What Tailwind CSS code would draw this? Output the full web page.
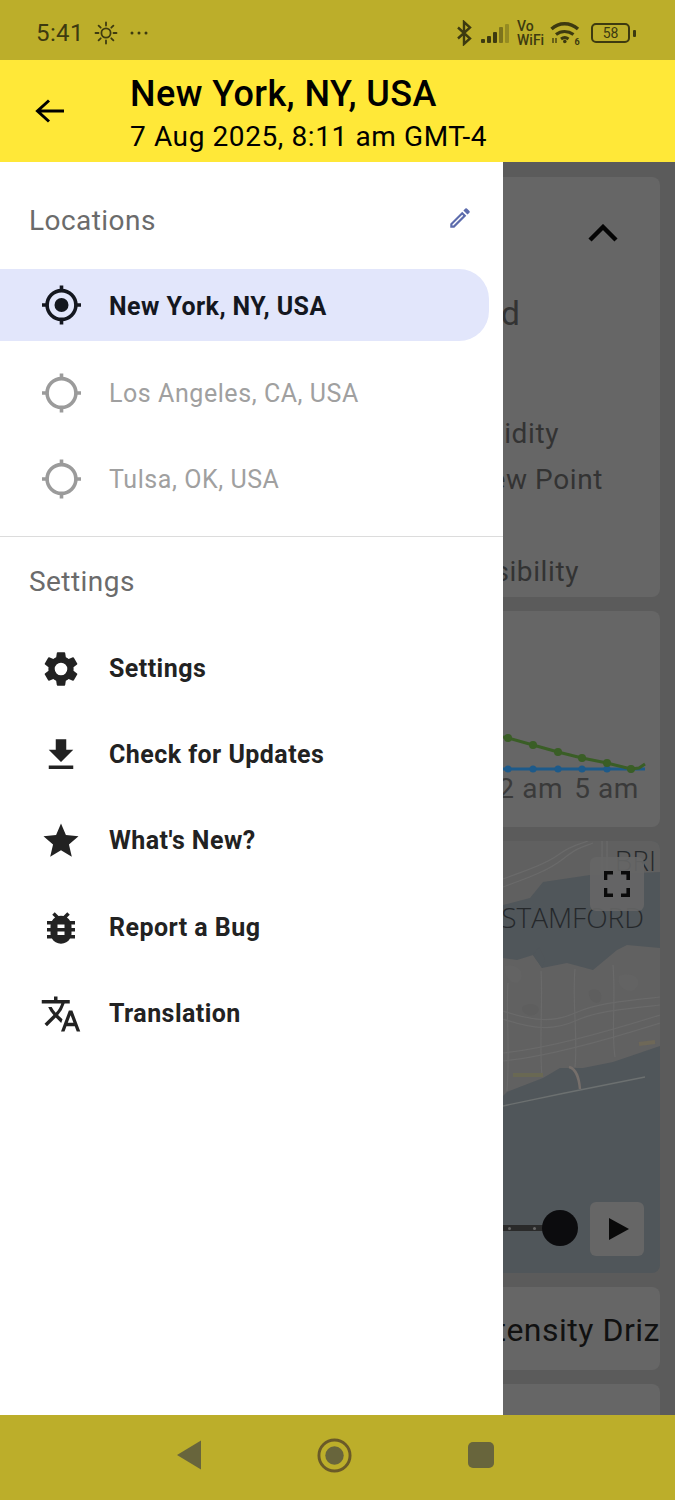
<!DOCTYPE html>
<html>
<head>
<meta charset="utf-8">
<script src="https://cdn.jsdelivr.net/npm/@tailwindcss/browser@4"></script>
</head>
<body class="m-0 bg-white">
<div class="w-[675px] h-[1500px] flex flex-col overflow-hidden font-['Roboto',sans-serif] bg-white">
  <!-- status bar -->
  <div class="h-[60px] shrink-0 bg-[#bcae2a] flex items-center justify-between pl-[36px] pr-[39px] pt-[6px] text-[#3d3a10]">
    <div class="flex items-center">
      <span class="text-[24px] leading-none tracking-[0.4px]">5:41</span>
      <svg class="ml-[10px] w-[24px] h-[24px]" viewBox="0 0 24 24" fill="none" stroke="#3d3a10" stroke-width="1.8" stroke-linecap="round"><circle cx="12" cy="12" r="4.6"/><path d="M12 1.5v3M12 19.500v3M1.500 12h3M19.500 12h3M4.600 4.600l2.100 2.100M17.300 17.300l2.100 2.100M4.600 19.400l2.100-2.100M17.300 6.700l2.100-2.100"/></svg>
      <svg class="ml-[11px] w-[20px] h-[6px]" viewBox="0 0 20 6" fill="#3d3a10"><circle cx="3" cy="3" r="1.500"/><circle cx="10" cy="3" r="1.500"/><circle cx="17" cy="3" r="1.500"/></svg>
    </div>
    <div class="flex items-center">
      <svg class="w-[16px] h-[26px]" viewBox="0 0 16 26" fill="none" stroke="#3d3a10" stroke-width="2.400"><path d="M2 7.500l12 11-6 5.500V2l6 5.500-12 11"/></svg>
      <svg class="ml-[9px] w-[30px] h-[24px]" viewBox="0 0 30 24"><rect x="0" y="18" width="4" height="4" rx="1" fill="#3d3a10"/><rect x="6" y="15" width="4" height="7" rx="1" fill="#3d3a10"/><rect x="12" y="11" width="4" height="11" rx="1" fill="#3d3a10"/><rect x="18" y="6" width="4" height="16" rx="1" fill="#3d3a10" opacity=".5"/><rect x="24" y="3" width="4" height="19" rx="1" fill="#3d3a10" opacity=".3"/></svg>
      <div class="ml-[6px] w-[28px] text-[14px] leading-[14px] font-medium flex flex-col items-start"><span>Vo</span><span>WiFi</span></div>
      <svg class="ml-[5px] w-[31px] h-[24px]" viewBox="0 0 31 24" fill="none" stroke="#3d3a10" stroke-linecap="butt"><path stroke-width="3.400" d="M1.500 8C9 1 20 1 28 8"/><path stroke-width="3.200" d="M6 13.500C11 9.500 18 9.500 23.500 13.500"/><path stroke-width="3" d="M11 18c2.500-1.800 5-1.800 7.500 0"/><circle cx="14.800" cy="20.500" r="1.800" fill="#3d3a10" stroke="none"/><path stroke-width="1.300" d="M3 22v-5M6 22v-5"/><text x="24.500" y="23.500" font-size="9" font-weight="700" fill="#3d3a10" stroke="none" font-family="Roboto">6</text></svg>
      <div class="ml-[10px] w-[39px] h-[20px] rounded-[5px] border-2 border-[#3d3a10] flex items-center justify-center text-[14px] leading-none">58</div>
      <div class="ml-[3px] w-[3px] h-[7px] bg-[#3d3a10] rounded-[1px]"></div>
    </div>
  </div>
  <!-- header -->
  <div class="h-[102px] shrink-0 bg-[#ffe838] flex items-start pt-[13px] text-black">
    <div class="w-[130px] shrink-0 pl-[34px] self-center -mt-[13px]">
      <svg class="w-[30px] h-[30px]" viewBox="0 0 30 30" fill="none" stroke="#000" stroke-width="3"><path d="M30 15H3M15 4.500L3.500 15 15 25.500"/></svg>
    </div>
    <div class="flex flex-col">
      <span class="text-[36px] leading-[42px] font-medium whitespace-nowrap tracking-[0.42px]">New York, NY, USA</span>
      <span class="mt-[5px] text-[28px] leading-[34px] whitespace-nowrap tracking-[0.6px]">7 Aug 2025, 8:11 am GMT-4</span>
    </div>
  </div>
  <!-- body -->
  <div class="flex-1 flex min-h-0">
    <!-- drawer -->
    <div class="w-[503px] shrink-0 bg-white flex flex-col">
      <div class="h-[107px] shrink-0 pl-[29px] pr-[30px] pt-[36px] flex items-start justify-between">
        <span class="text-[28px] leading-[46px] tracking-[0.45px] text-[#6b6b6b]">Locations</span>
        <svg class="w-[26px] h-[26px] mt-[7px]" viewBox="0 0 24 24" fill="#5c6bac"><path d="M3 17.250V21h3.750L17.810 9.940l-3.750-3.750L3 17.250zM5.920 19H5v-.920l9.060-9.060.920.920L5.920 19zM20.710 7.040a1 1 0 0 0 0-1.410l-2.340-2.340a1 1 0 0 0-1.410 0l-1.830 1.830 3.750 3.750 1.830-1.830z"/></svg>
      </div>
      <div class="h-[72px] shrink-0 w-[489px] bg-[#e2e6fb] rounded-r-[30px] flex items-center pl-[40px] text-[#14171f]">
        <svg class="w-[42px] h-[42px] shrink-0" viewBox="0 0 42 42" fill="none" stroke="currentColor" stroke-width="3.600"><circle cx="21.500" cy="21" r="14.400"/><circle cx="21.500" cy="21" r="7" fill="currentColor" stroke="none"/><path d="M21.500 1.500v6M21.500 34.500v6M2 21h6M35 21h6"/></svg>
        <span class="ml-[27px] mt-[3px] text-[25px] font-bold whitespace-nowrap tracking-[0.42px]">New York, NY, USA</span>
      </div>
      <div class="h-[86px] shrink-0 flex items-center pl-[40px] mt-[9px]">
        <svg class="w-[42px] h-[42px] shrink-0 text-[#9b9b9b]" viewBox="0 0 42 42" fill="none" stroke="currentColor" stroke-width="3.600"><circle cx="21.500" cy="21" r="14.400"/><path d="M21.500 1.500v6M21.500 34.500v6M2 21h6M35 21h6"/></svg>
        <span class="ml-[27px] mt-[2px] text-[25px] text-[#a0a0a0] whitespace-nowrap tracking-[0.56px]">Los Angeles, CA, USA</span>
      </div>
      <div class="h-[86px] shrink-0 flex items-center pl-[40px]">
        <svg class="w-[42px] h-[42px] shrink-0 text-[#9b9b9b]" viewBox="0 0 42 42" fill="none" stroke="currentColor" stroke-width="3.600"><circle cx="21.500" cy="21" r="14.400"/><path d="M21.500 1.500v6M21.500 34.500v6M2 21h6M35 21h6"/></svg>
        <span class="ml-[27px] mt-[2px] text-[25px] text-[#a0a0a0] whitespace-nowrap tracking-[0.56px]">Tulsa, OK, USA</span>
      </div>
      <div class="h-[1px] shrink-0 bg-[#dcdcdc] mt-[14px]"></div>
      <div class="pl-[29px] pt-[22px] text-[28px] leading-[46px] tracking-[0.45px] text-[#6b6b6b] h-[89px] shrink-0">Settings</div>
      <div class="h-[86px] shrink-0 flex items-center pl-[41px] text-[#222222]">
        <svg class="w-[42px] h-[42px] shrink-0 -ml-[1px] mr-[1px]" viewBox="0 0 24 24" fill="currentColor"><path d="M19.140 12.940c.040-.300.060-.610.060-.940 0-.320-.020-.640-.070-.940l2.030-1.580a.49.49 0 0 0 .120-.610l-1.920-3.320a.49.49 0 0 0-.590-.220l-2.390.960c-.500-.380-1.030-.700-1.620-.940l-.360-2.540a.48.480 0 0 0-.480-.410h-3.840a.47.47 0 0 0-.470.410l-.360 2.540c-.590.240-1.130.570-1.620.940l-2.390-.960a.48.480 0 0 0-.590.220L2.740 8.870a.48.480 0 0 0 .120.610l2.030 1.580c-.050.300-.090.630-.090.940s.020.640.070.940l-2.030 1.580a.49.49 0 0 0-.120.610l1.920 3.320c.120.220.37.290.590.220l2.390-.960c.500.380 1.030.700 1.620.940l.360 2.540c.050.240.240.410.480.410h3.840c.240 0 .440-.170.470-.410l.360-2.540c.590-.240 1.130-.560 1.620-.940l2.390.960c.220.080.470 0 .590-.220l1.920-3.320a.47.470 0 0 0-.120-.610l-2.010-1.580zM12 15.600A3.610 3.610 0 0 1 8.400 12 3.610 3.610 0 0 1 12 8.400a3.610 3.610 0 0 1 3.600 3.600 3.610 3.610 0 0 1-3.600 3.600z"/></svg>
        <span class="ml-[26px] text-[25px] font-bold whitespace-nowrap tracking-[0.45px]">Settings</span>
      </div>
      <div class="h-[86px] shrink-0 flex items-center pl-[41px] text-[#222222]">
        <svg class="w-[42px] h-[42px] shrink-0 -ml-[1px] mr-[1px]" viewBox="0 0 24 24" fill="currentColor"><path d="M19 9h-4V3H9v6H5l7 7 7-7zM5 18v2h14v-2H5z"/></svg>
        <span class="ml-[26px] text-[25px] font-bold whitespace-nowrap tracking-[0.45px]">Check for Updates</span>
      </div>
      <div class="h-[86px] shrink-0 flex items-center pl-[41px] text-[#222222]">
        <svg class="w-[42px] h-[42px] shrink-0 -ml-[1px] mr-[1px]" viewBox="0 0 24 24" fill="currentColor"><path d="M12 17.270L18.180 21l-1.640-7.030L22 9.240l-7.190-.610L12 2 9.190 8.630 2 9.240l5.460 4.730L5.820 21z"/></svg>
        <span class="ml-[26px] text-[25px] font-bold whitespace-nowrap tracking-[0.45px]">What's New?</span>
      </div>
      <div class="h-[87px] shrink-0 flex items-center pl-[41px] text-[#222222]">
        <svg class="w-[42px] h-[42px] shrink-0 -ml-[1px] mr-[1px]" viewBox="0 0 24 24" fill="currentColor"><path d="M20 8h-2.810a5.985 5.985 0 0 0-1.820-1.960L17 4.410 15.590 3l-2.170 2.170a5.940 5.940 0 0 0-2.830 0L8.410 3 7 4.410l1.620 1.630C7.880 6.550 7.260 7.220 6.810 8H4v2h2.090c-.050.330-.090.660-.090 1v1H4v2h2v1c0 .340.040.670.090 1H4v2h2.810c1.040 1.790 2.970 3 5.190 3s4.150-1.210 5.190-3H20v-2h-2.090c.050-.330.090-.660.090-1v-1h2v-2h-2v-1c0-.340-.040-.670-.090-1H20V8zm-6 8h-4v-2h4v2zm0-4h-4v-2h4v2z"/></svg>
        <span class="ml-[26px] text-[25px] font-bold whitespace-nowrap tracking-[0.45px]">Report a Bug</span>
      </div>
      <div class="h-[86px] shrink-0 flex items-center pl-[41px] text-[#222222]">
        <svg class="w-[42px] h-[42px] shrink-0 -ml-[1px] mr-[1px]" viewBox="0 0 24 24" fill="currentColor"><path d="M12.870 15.070l-2.540-2.510.030-.030A17.520 17.520 0 0 0 14.070 6H17V4h-7V2H8v2H1v1.990h11.170C11.500 7.920 10.440 9.750 9 11.350 8.070 10.320 7.300 9.190 6.690 8h-2c.730 1.630 1.730 3.170 2.980 4.560l-5.090 5.020L4 19l5-5 3.110 3.110.760-2.040zM18.500 10h-2L12 22h2l1.120-3h4.750L21 22h2l-4.500-12zm-2.620 7l1.620-4.330L19.120 17h-3.240z"/></svg>
        <span class="ml-[26px] text-[25px] font-bold whitespace-nowrap tracking-[0.45px]">Translation</span>
      </div>
    </div>
    <!-- dimmed content behind the drawer -->
    <div class="flex-1 min-w-0 overflow-hidden bg-[#5b5b5b] flex flex-col pt-[15px] pr-[15px] gap-[14px]">
      <div class="h-[420px] shrink-0 bg-[#666666] rounded-r-[8px] relative flex flex-col items-end text-[#333333] whitespace-nowrap">
        <svg class="mt-[47px] mr-[42px] w-[30px] h-[18px]" viewBox="0 0 30 18" fill="none" stroke="#050505" stroke-width="4.400"><path d="M2 16L15 3l13 13"/></svg>
        <span class="mt-[49px] mr-[140px] text-[34px] leading-[44px]">Wind</span>
        <span class="mt-[82px] mr-[101px] text-[28px] leading-[34px] tracking-[0.6px]">Humidity</span>
        <span class="mt-[12px] mr-[57px] text-[28px] leading-[34px] tracking-[0.6px]">Dew Point</span>
        <span class="mt-[58px] mr-[81px] text-[28px] leading-[34px] tracking-[0.6px]">Visibility</span>
      </div>
      <div class="h-[216px] shrink-0 bg-[#666666] rounded-r-[8px] flex flex-col items-end text-[#333333] whitespace-nowrap">
        <svg class="mt-[121px] w-[157px] h-[42px] self-start" viewBox="0 0 157 42" fill="none" stroke-width="3">
          <path d="M0 37H142" stroke="#1d5a8a"/>
          <g fill="#1d5a8a" stroke="none"><circle cx="5" cy="37" r="3.500"/><circle cx="30" cy="37" r="3.500"/><circle cx="55" cy="37" r="3.500"/><circle cx="79" cy="37" r="3.500"/><circle cx="104" cy="37" r="3.500"/><circle cx="128" cy="37" r="3.500"/></g>
          <path d="M0 5L5 6L30 13L55 20L79 26L104 31L128 37L136 36L142 32" stroke="#3a5e26"/>
          <g fill="#3a5e26" stroke="none"><circle cx="5" cy="6" r="4"/><circle cx="30" cy="13" r="4"/><circle cx="55" cy="20" r="4"/><circle cx="79" cy="26" r="4"/><circle cx="104" cy="31" r="4"/><circle cx="128" cy="37" r="4"/></g>
        </svg>
        <div class="-mt-[2px] mr-[21px] flex gap-[11px] text-[28px] leading-[34px] tracking-[0.6px] text-[#3a3a3a]"><span>2 am</span><span>5 am</span></div>
      </div>
      <div class="h-[432px] shrink-0 bg-[#50565a] rounded-r-[8px] relative overflow-hidden">
        <svg class="absolute inset-0 w-[157px] h-[432px]" viewBox="0 0 157 432">
          <path d="M0 0H157V31L87 34L40 41L27 57L0 64Z" fill="#606060"/>
          <path d="M0 117L14 119L30 114L39 127L64 122L90 129L114 109L124 104L157 107V205L110 221L80 227L57 227L40 237L4 251L0 255Z" fill="#616161"/>
          <path d="M30 114L36 106L42 118L39 127Z" fill="#50565a"/>
          <path d="M86 150C92 146 100 150 98 158S84 160 86 150ZM20 165C30 160 40 166 34 172S16 172 20 165Z" fill="#5e5e5e"/>
          <path d="M116 135C126 130 140 136 134 146S112 146 116 135ZM2 125C10 122 22 128 18 138S0 138 2 125Z" fill="#636363"/>
          <g fill="none" stroke="#6a6a6a" stroke-width="1.200">
            <path d="M0 38C20 30 40 25 55 14S75 4 85 0M0 46C22 38 45 30 60 18S80 6 90 2M99 0V30M104 0V30"/>
            <path d="M0 170C30 180 50 182 72 172S120 160 157 156M0 178C30 188 50 190 72 180S120 168 157 164M0 212C40 208 100 192 157 174M0 220C40 216 100 200 157 182"/>
            <path d="M5 142C3 170 7 210 4 250M72 128C69 160 75 195 72 226M110 124C113 160 108 190 112 216M38 130C40 160 36 200 39 236"/>
          </g>
          <path d="M66 226C74 228 76 238 77 248" fill="none" stroke="#766f6b" stroke-width="2.500"/>
          <path d="M0 265L62 252L142 236" fill="none" stroke="#6c7070" stroke-width="1.300"/>
          <path d="M10 234H40" stroke="#696853" stroke-width="4"/>
          <path d="M136 203L152 201" stroke="#6e6858" stroke-width="4"/>
        </svg>
        <span class="absolute right-[16px] top-[61px] font-['Open_Sans',sans-serif] font-light text-[28px] leading-[30px] text-[#25282b] whitespace-nowrap">STAMFORD</span>
        <span class="absolute right-[4px] top-[4px] font-['Open_Sans',sans-serif] font-light text-[28px] leading-[30px] text-[#25282b] whitespace-nowrap">BRI</span>
        <div class="absolute right-[16px] top-[16px] w-[54px] h-[54px] rounded-[6px] bg-[#666666]/90 flex items-center justify-center">
          <svg class="w-[26px] h-[26px]" viewBox="0 0 26 26" fill="none" stroke="#0a0a0a" stroke-width="3.600"><path d="M1.500 9V1.800H9M17 1.800h7.200V9M1.500 17v7.200H9M17 24.200h7.200V17"/></svg>
        </div>
        <div class="absolute left-0 top-[384px] w-[60px] h-[6px] bg-[#2a2a2a] flex items-center gap-[22px] pl-[5px]">
          <span class="w-[3px] h-[3px] rounded-full bg-[#666666]"></span>
          <span class="w-[3px] h-[3px] rounded-full bg-[#666666]"></span>
        </div>
        <div class="absolute left-[39px] top-[369px] w-[36px] h-[36px] rounded-full bg-[#0c0c0e]"></div>
        <div class="absolute right-[16px] top-[361px] w-[54px] h-[54px] rounded-[6px] bg-[#666666] flex items-center justify-center">
          <svg class="ml-[4px] w-[20px] h-[22px]" viewBox="0 0 20 22" fill="#0a0a0a"><path d="M0 0L20 11L0 22Z"/></svg>
        </div>
      </div>
      <div class="h-[83px] shrink-0 bg-[#666666] rounded-r-[8px] flex items-center overflow-hidden justify-end text-[#111111]">
        <span class="mt-[2px] text-[32px] whitespace-nowrap tracking-[0.5px] -mr-[42px]">Light Intensity Drizzle</span>
      </div>
      <div class="h-[60px] shrink-0 bg-[#666666] rounded-r-[8px]"></div>
    </div>
  </div>
  <!-- nav bar -->
  <div class="h-[85px] shrink-0 bg-[#bcae2a] flex items-center justify-center gap-[116px] pb-[5px] pr-[4px]">
    <svg class="w-[24px] h-[30px]" viewBox="0 0 24 30" fill="#68653c"><path d="M24 0.500V29.500L0 15Z"/></svg>
    <svg class="w-[35px] h-[35px]" viewBox="0 0 36 36"><circle cx="18" cy="18" r="16" fill="none" stroke="#6a5a28" stroke-width="3"/><circle cx="18" cy="18" r="9.500" fill="#68653c"/></svg>
    <svg class="w-[26px] h-[26px]" viewBox="0 0 26 26" fill="#68653c"><rect width="26" height="26" rx="5"/></svg>
  </div>
</div>
</body>
</html>
